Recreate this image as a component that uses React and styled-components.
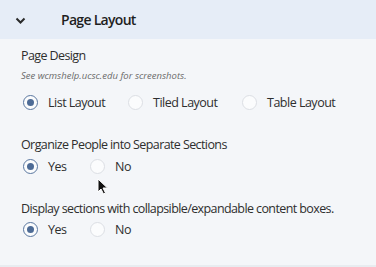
import React from 'react';
import styled, { createGlobalStyle } from 'styled-components';

const GlobalStyle = createGlobalStyle`
  html, body {
    margin: 0;
    padding: 0;
    background: #f4f6f9;
  }
  body {
    font-family: "Open Sans", "Liberation Sans", sans-serif;
    color: #2b2b2b;
  }
`;

const Panel = styled.section`
  width: 376px;
  height: 267px;
  position: relative;
  overflow: hidden;
  background: #f4f6f9;
  border-bottom: 2px solid #e8ecf0;
  box-sizing: border-box;
`;

const Header = styled.header`
  height: 39px;
  display: flex;
  align-items: center;
  background: #e6edf7;
  padding-left: 15px;
`;

const Chevron = styled.svg`
  width: 11px;
  height: 8px;
  margin-right: 35px;
  margin-top: 2px;
`;

const Title = styled.h2`
  margin: 0;
  font-size: 14px;
  font-weight: 600;
  color: #1f1f1f;
  letter-spacing: -0.7px;
`;

const Body = styled.div`
  padding: 8px 21px 0;
  display: flex;
  flex-direction: column;
`;

const Field = styled.div`
  display: flex;
  flex-direction: column;
  margin-bottom: ${p => p.$gap || 0}px;
`;

const Label = styled.div`
  font-size: 12.5px;
  line-height: 18px;
  letter-spacing: -0.6px;
  color: #2e2e2e;
`;

const Hint = styled.div`
  font-size: 9.5px;
  font-style: italic;
  color: #6a6a6a;
  line-height: 14px;
  margin-top: 4px;
`;

const Options = styled.div`
  display: flex;
  align-items: center;
  margin-top: ${p => p.$top || 2}px;
  height: 20px;
`;

const Option = styled.label`
  display: flex;
  align-items: center;
  width: ${p => p.$width}px;
  font-size: 12.5px;
  letter-spacing: -0.5px;
  color: #2e2e2e;
`;

const Radio = styled.span`
  width: 15px;
  height: 15px;
  box-sizing: border-box;
  border-radius: 50%;
  margin: 0 10px 0 2px;
  background: #fbfcfd;
  border: 1.5px solid ${p => (p.$checked ? '#5a77a0' : '#dcdfe4')};
  display: flex;
  align-items: center;
  justify-content: center;

  &::after {
    content: '';
    width: 7px;
    height: 7px;
    border-radius: 50%;
    background: ${p => (p.$checked ? '#4d6b96' : 'transparent')};
  }
`;

const Cursor = styled.svg`
  position: absolute;
  left: 97px;
  top: 178px;
  width: 12px;
  height: 17px;
`;

const RadioGroup = ({ items, top }) => (
  <Options $top={top}>
    {items.map(item => (
      <Option key={item.label} $width={item.width}>
        <Radio $checked={item.checked} />
        {item.label}
      </Option>
    ))}
  </Options>
);

const App = () => (
  <>
    <GlobalStyle />
    <Panel>
      <Header>
        <Chevron viewBox="0 0 11 8">
          <path d="M1.5 1.5 L5.5 5.5 L9.5 1.5" fill="none" stroke="#2a2a2a" strokeWidth="2" />
        </Chevron>
        <Title>Page Layout</Title>
      </Header>
      <Body>
        <Field $gap={24}>
          <Label>Page Design</Label>
          <Hint>See wcmshelp.ucsc.edu for screenshots.</Hint>
          <RadioGroup
            top={9}
            items={[
              { label: 'List Layout', checked: true, width: 105 },
              { label: 'Tiled Layout', width: 114 },
              { label: 'Table Layout', width: 110 },
            ]}
          />
        </Field>
        <Field $gap={24}>
          <Label>Organize People into Separate Sections</Label>
          <RadioGroup
            items={[
              { label: 'Yes', checked: true, width: 67 },
              { label: 'No', width: 60 },
            ]}
          />
        </Field>
        <Field>
          <Label>Display sections with collapsible/expandable content boxes.</Label>
          <RadioGroup
            top={1}
            items={[
              { label: 'Yes', checked: true, width: 67 },
              { label: 'No', width: 60 },
            ]}
          />
        </Field>
      </Body>
      <Cursor viewBox="0 0 12 17">
        <path d="M1 1 L1 14 L4 11 L6.5 16 L8.5 15 L6 10 L10.5 10 Z" fill="#111" stroke="#fff" strokeWidth="1" />
      </Cursor>
    </Panel>
  </>
);

export default App;
